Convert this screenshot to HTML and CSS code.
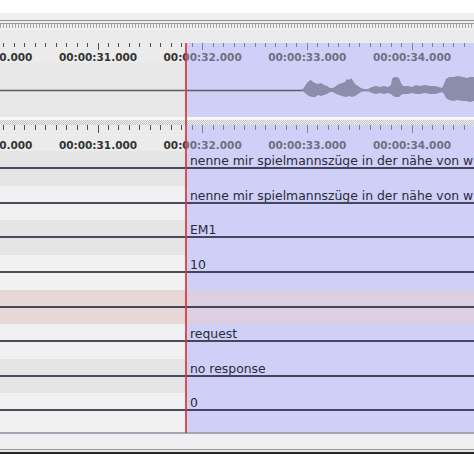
FILE: index.html
```html
<!DOCTYPE html>
<html lang="de">
<head>
<meta charset="utf-8">
<title>Annotation</title>
<link rel="stylesheet" href="styles.css">
</head>
<body>
<div class="screen">
  <!-- signal pane -->
  <div class="pane">
    <div class="strip strip-hatch"></div>
    <div class="ruler ruler-top">
      <div class="scale">
        <div class="ticks"></div>
        <div class="labels">
          <span>00:00:30.000</span><span>00:00:31.000</span><span>00:00:32.000</span><span>00:00:33.000</span><span>00:00:34.000</span><span>00:00:35.000</span>
        </div>
      </div>
    </div>
    <div class="track">
      <svg class="wave" viewBox="0 0 474 54" width="474" height="54">
        <line x1="0" y1="27.5" x2="474" y2="27.5" stroke="#5e5e66" stroke-width="1.4"/>
        <polygon fill="#8c8cab" points="300,27 303,26 305,23 307,20 309,18 311,17 313,19 315,20 318,21 321,20 324,22 327,23 330,25 333,25 336,23 339,21 342,20 345,19 347,16 349,17 351,15 353,18 355,21 358,23 361,25 364,26 368,26 372,24 376,23 380,24 384,23 388,24 391,22 392,16 394,14 397,14 399,15 401,20 403,23 408,23 412,24 416,22 420,23 425,22 430,23 435,23 439,24 442,25 444,21 446,16 449,14 453,14 458,13 463,14 467,15 470,14 474,14 474,38 470,39 466,38 462,38 458,37 453,38 449,37 446,35 444,31 442,29 439,30 435,31 430,31 425,30 420,31 416,31 412,30 408,31 403,31 401,32 399,34 396,34 393,33 391,31 388,30 384,31 380,30 376,31 372,30 368,28 364,28 361,29 358,31 355,33 352,34 349,33 346,34 342,33 339,32 336,31 333,29 330,29 327,31 324,32 321,33 318,32 315,34 312,34 309,33 306,31 303,28"/>
      </svg>
    </div>
  </div>

  <div class="gap"></div>

  <!-- annotation pane -->
  <div class="pane">
    <div class="strip strip-dots"></div>
    <div class="ruler ruler-bottom">
      <div class="scale">
        <div class="ticks"></div>
        <div class="labels">
          <span>00:00:30.000</span><span>00:00:31.000</span><span>00:00:32.000</span><span>00:00:33.000</span><span>00:00:34.000</span><span>00:00:35.000</span>
        </div>
      </div>
    </div>
    <div class="tiers">
      <div class="tier tier-dark"><div class="cell"><div class="lab"></div></div><div class="cell cell-sel"><div class="lab">nenne mir spielmannszüge in der nähe von w</div></div></div>
      <div class="tier tier-light"><div class="cell"><div class="lab"></div></div><div class="cell cell-sel"><div class="lab">nenne mir spielmannszüge in der nähe von w</div></div></div>
      <div class="tier tier-dark"><div class="cell"><div class="lab"></div></div><div class="cell cell-sel"><div class="lab">EM1</div></div></div>
      <div class="tier tier-light"><div class="cell"><div class="lab"></div></div><div class="cell cell-sel"><div class="lab">10</div></div></div>
      <div class="tier tier-pink"><div class="cell"><div class="lab"></div></div><div class="cell cell-sel"><div class="lab"></div></div></div>
      <div class="tier tier-light"><div class="cell"><div class="lab"></div></div><div class="cell cell-sel"><div class="lab">request</div></div></div>
      <div class="tier tier-dark"><div class="cell"><div class="lab"></div></div><div class="cell cell-sel"><div class="lab">no response</div></div></div>
      <div class="tier tier-light"><div class="cell"><div class="lab"></div></div><div class="cell cell-sel"><div class="lab">0</div></div></div>
      <div class="tier tier-light tier-fill"><div class="cell"></div><div class="cell cell-sel"></div></div>
    </div>
    <div class="foot">
      <div class="foot-line"></div>
      <div class="foot-panel"></div>
      <div class="foot-edge"></div>
      <div class="foot-gap"></div>
      <div class="foot-dark"></div>
    </div>
  </div>

  <!-- play cursor -->
  <div class="cursor"></div>
</div>
</body>
</html>
```

FILE: styles.css
```css
html, body {
  margin: 0;
  background: #ffffff;
}

body {
  font-family: "DejaVu Sans", "Noto Sans", sans-serif;
}

.screen {
  position: relative;
  width: 474px;
  height: 474px;
  padding-top: 13px;
  box-sizing: border-box;
  overflow: hidden;
}

/* thin textured strips above each ruler */
.strip-hatch {
  height: 17px;
  background:
    linear-gradient(#8c8c8c, #8c8c8c) 0 7px / 100% 1px no-repeat,
    linear-gradient(#9c9c9c, #9c9c9c) 0 10px / 100% 1px no-repeat,
    repeating-linear-gradient(90deg, #a4a4a4 0 1px, transparent 1px 3px) 0 11px / 100% 4px no-repeat,
    #efefef;
}

.gap {
  height: 3px;
  background: #f8f8f8;
}

.strip-dots {
  height: 5px;
  background:
    repeating-conic-gradient(#c2c2c2 0 25%, transparent 0 50%) 0 0 / 2px 2px,
    #f1f1f1;
}

/* time rulers */
.ruler {
  background: #ebebeb;
  box-sizing: border-box;
}

.ruler-top {
  height: 33px;
  padding-top: 13px;
}

.scale {
  position: relative;
  height: 20px;
  background: linear-gradient(90deg, transparent 186px, #cfcff8 186px);
}

.ruler-bottom .scale {
  height: 26px;
}

/* selection veil dims whatever of the scale lies inside it */
.scale::after {
  content: "";
  position: absolute;
  left: 186px;
  right: 0;
  top: 0;
  bottom: 0;
  background: rgba(207, 207, 248, 0.38);
}

.ticks {
  height: 7px;
  background:
    repeating-linear-gradient(90deg, transparent 0 97.5px, #4e4e4e 97.5px 98.5px, transparent 98.5px 104.67px) 0 0 / 100% 7px no-repeat,
    repeating-linear-gradient(90deg, transparent 0 3.3px, #4e4e4e 3.3px 4.3px, transparent 4.3px 10.467px) 0 0 / 100% 4px no-repeat;
}

.ruler-bottom .ticks {
  height: 8px;
  background:
    repeating-linear-gradient(90deg, transparent 0 97.5px, #4e4e4e 97.5px 98.5px, transparent 98.5px 104.67px) 0 0 / 100% 8px no-repeat,
    repeating-linear-gradient(90deg, transparent 0 3.3px, #4e4e4e 3.3px 4.3px, transparent 4.3px 10.467px) 0 0 / 100% 5px no-repeat;
}

.labels {
  display: flex;
  margin-left: -59px;
  margin-top: 1px;
  font-weight: bold;
  font-size: 10.5px;
  line-height: 13px;
  color: #333333;
  white-space: nowrap;
}

.ruler-bottom .labels {
  margin-top: 6px;
}

.labels span {
  flex: none;
  width: 104.67px;
  text-align: center;
}

/* waveform track */
.track {
  height: 54px;
  background: linear-gradient(90deg, #e7e7e7 186px, #cfcff8 186px);
}

.wave {
  display: block;
}

/* annotation tiers */
.tier {
  display: grid;
  grid-template-columns: 186px 1fr;
  height: 34.625px;
}

.tier-fill {
  height: 4px;
}

.tier-dark .cell { background: #e5e5e5; }
.tier-light .cell { background: #f1f1f1; }
.tier-pink .cell { background: #e8d7d7; }

.tier .cell-sel { background: #cfcff8; }
.tier-pink .cell-sel { background: #dccfe2; }

.lab {
  height: 13px;
  padding: 3px 0 0 4px;
  border-bottom: 2px solid rgba(38, 38, 58, 0.82);
  font-size: 12.4px;
  line-height: 14px;
  color: #2a2a36;
  white-space: nowrap;
  overflow: hidden;
}

/* window bottom edge */
.foot-line {
  height: 2px;
  background: #a2a8b3;
}

.foot-panel {
  height: 15px;
  background: #efeff1;
}

.foot-edge {
  height: 1px;
  background: #9a9a9a;
}

.foot-gap {
  height: 2px;
  background: #e4e4e4;
}

.foot-dark {
  height: 2px;
  background: #262626;
}

.cursor {
  position: absolute;
  left: 185px;
  top: 43px;
  width: 2px;
  height: 390px;
  background: rgba(222, 52, 52, 0.85);
}
```
